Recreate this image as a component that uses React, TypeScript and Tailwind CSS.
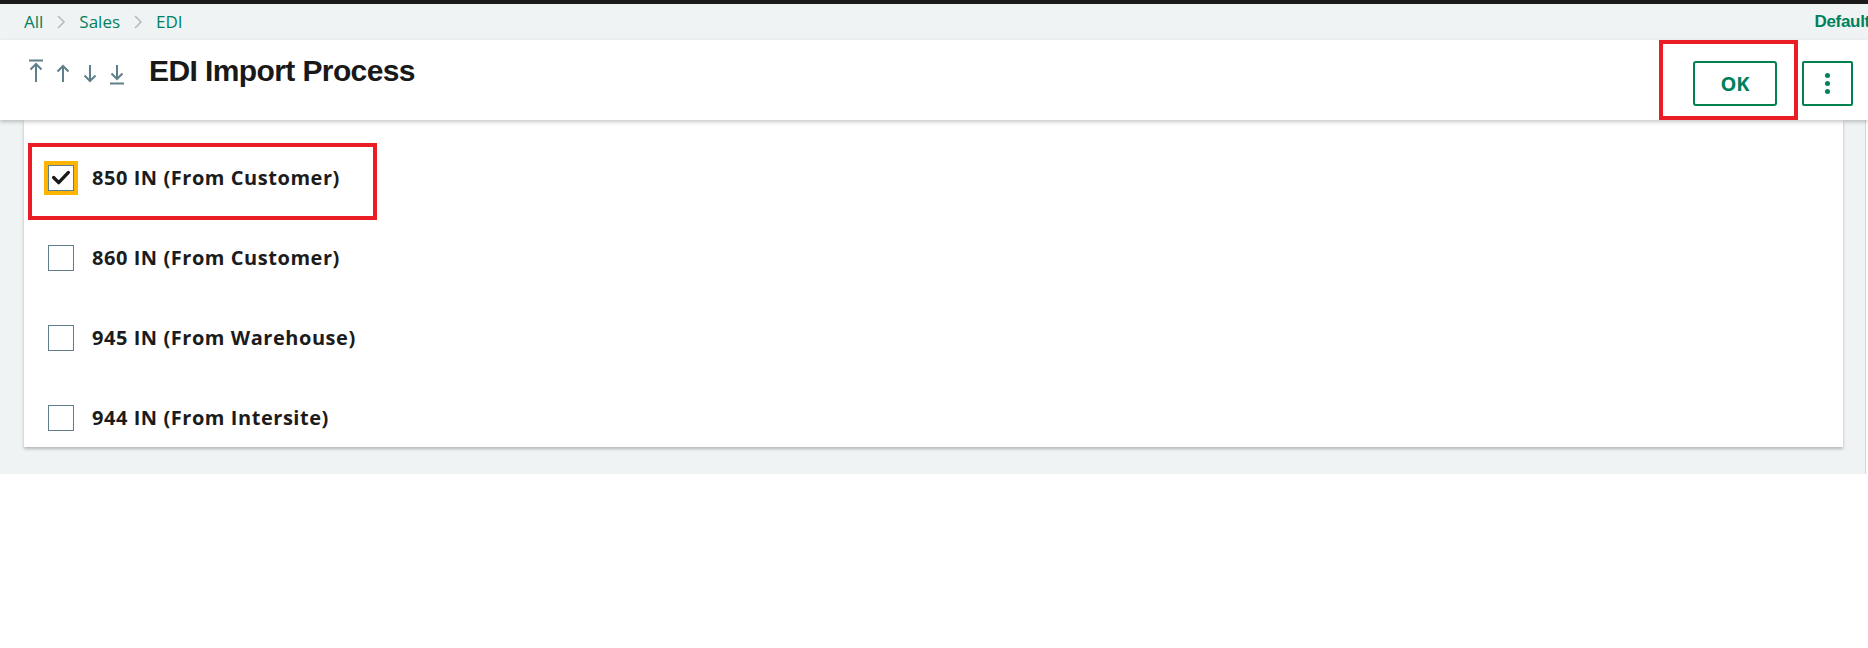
import React from "react";

const Arrow = ({ kind }: { kind: "top" | "up" | "down" | "bottom" }) => (
  <svg width="14" height="26" viewBox="0 0 14 26" fill="none" stroke="#5f7f8b" strokeWidth="2" strokeLinecap="butt" strokeLinejoin="miter">
    {kind === "top" && (
      <>
        <line x1="0" y1="1.5" x2="14" y2="1.5" />
        <line x1="7" y1="5" x2="7" y2="23" />
        <polyline points="1.5,10.5 7,5 12.5,10.5" />
      </>
    )}
    {kind === "up" && (
      <>
        <line x1="7" y1="7" x2="7" y2="23" />
        <polyline points="1.5,12.5 7,7 12.5,12.5" />
      </>
    )}
    {kind === "down" && (
      <>
        <line x1="7" y1="6" x2="7" y2="22" />
        <polyline points="1.5,16.5 7,22 12.5,16.5" />
      </>
    )}
    {kind === "bottom" && (
      <>
        <line x1="7" y1="6" x2="7" y2="20" />
        <polyline points="1.5,14.5 7,20 12.5,14.5" />
        <line x1="0" y1="24.5" x2="14" y2="24.5" />
      </>
    )}
  </svg>
);

const Chevron = () => (
  <svg width="10" height="16" viewBox="0 0 10 16" fill="none" stroke="#b8bcbe" strokeWidth="1.6">
    <polyline points="2,2 8,8 2,14" />
  </svg>
);

const Row = ({ label, checked }: { label: string; checked?: boolean }) => (
  <div className="relative flex items-center h-[26px]">
    <div
      className={
        "w-[26px] h-[26px] border border-[#5f7f8b] bg-white flex items-center justify-center " +
        (checked ? "shadow-[0_0_0_4px_#ffb500]" : "")
      }
    >
      {checked && (
        <svg width="26" height="26" viewBox="0 0 26 26" fill="none" stroke="#1a1a1a" strokeWidth="3.6" strokeLinecap="round" strokeLinejoin="round">
          <polyline points="5,12.5 10.5,18 21,7" />
        </svg>
      )}
    </div>
    <span className="ml-[18px] text-[20px] font-bold tracking-[0.55px] text-[#1c1c1c] leading-none font-['Open_Sans',sans-serif]">
      {label}
    </span>
    {checked && (
      <div className="absolute left-[-20px] top-[-22px] w-[349px] h-[77px] border-[4px] border-[#ea1c24] pointer-events-none" />
    )}
  </div>
);

export default function App() {
  return (
    <div className="w-[1868px] min-h-[648px] bg-white font-['Open_Sans',sans-serif] overflow-hidden">
      <div className="h-[4px] bg-[#1a1a1a]" />
      <div className="h-[36px] bg-[#eff3f4] flex items-center pl-[24px] text-[17px] text-[#00815d] overflow-hidden">
        <span>All</span>
        <span className="mx-[13px] flex items-center"><Chevron /></span>
        <span>Sales</span>
        <span className="mx-[13px] flex items-center"><Chevron /></span>
        <span>EDI</span>
        <span className="ml-auto mr-[-2px] shrink-0 whitespace-nowrap font-bold text-[17px] tracking-[-0.3px] font-['Liberation_Sans',Arial,sans-serif]">Default</span>
      </div>
      <header className="relative z-10 h-[80px] bg-white shadow-[0_2px_4px_rgba(0,0,0,0.22)] flex items-start">
        <div className="flex items-center mt-[19px] h-[26px] pl-[29px] gap-[13px]">
          <Arrow kind="top" />
          <Arrow kind="up" />
          <Arrow kind="down" />
          <Arrow kind="bottom" />
        </div>
        <h1 className="ml-[25px] mt-[16px] text-[30px] leading-[30px] font-bold tracking-[-0.6px] text-[#191919] font-['Liberation_Sans',Arial,sans-serif]">
          EDI Import Process
        </h1>
        <div className="ml-auto mt-[21px] mr-[15px] flex items-center gap-[25px]">
          <button className="w-[84px] h-[45px] border-2 border-[#00814d] rounded-[3px] text-[20px] font-bold text-[#00815d] bg-white">
            OK
          </button>
          <button className="w-[51px] h-[45px] border-2 border-[#00814d] rounded-[2px] bg-white flex flex-col items-center justify-center gap-[3px]">
            <span className="w-[5px] h-[5px] rounded-full bg-[#00815d]" />
            <span className="w-[5px] h-[5px] rounded-full bg-[#00815d]" />
            <span className="w-[5px] h-[5px] rounded-full bg-[#00815d]" />
          </button>
        </div>
        <div className="absolute left-[1659px] top-0 w-[139px] h-[80px] border-[4px] border-[#ea1c24] pointer-events-none" />
      </header>
      <div className="bg-[#eff3f4] pl-[24px] pr-[22px] pb-[27px] mr-[2px] border-r border-[#d3d9db]">
        <div className="bg-white shadow-[0_2px_3px_rgba(0,0,0,0.25)] pl-[24px] pt-[45px] pb-[16px] flex flex-col gap-[54px]">
          <Row label="850 IN (From Customer)" checked />
          <Row label="860 IN (From Customer)" />
          <Row label="945 IN (From Warehouse)" />
          <Row label="944 IN (From Intersite)" />
        </div>
      </div>
    </div>
  );
}
